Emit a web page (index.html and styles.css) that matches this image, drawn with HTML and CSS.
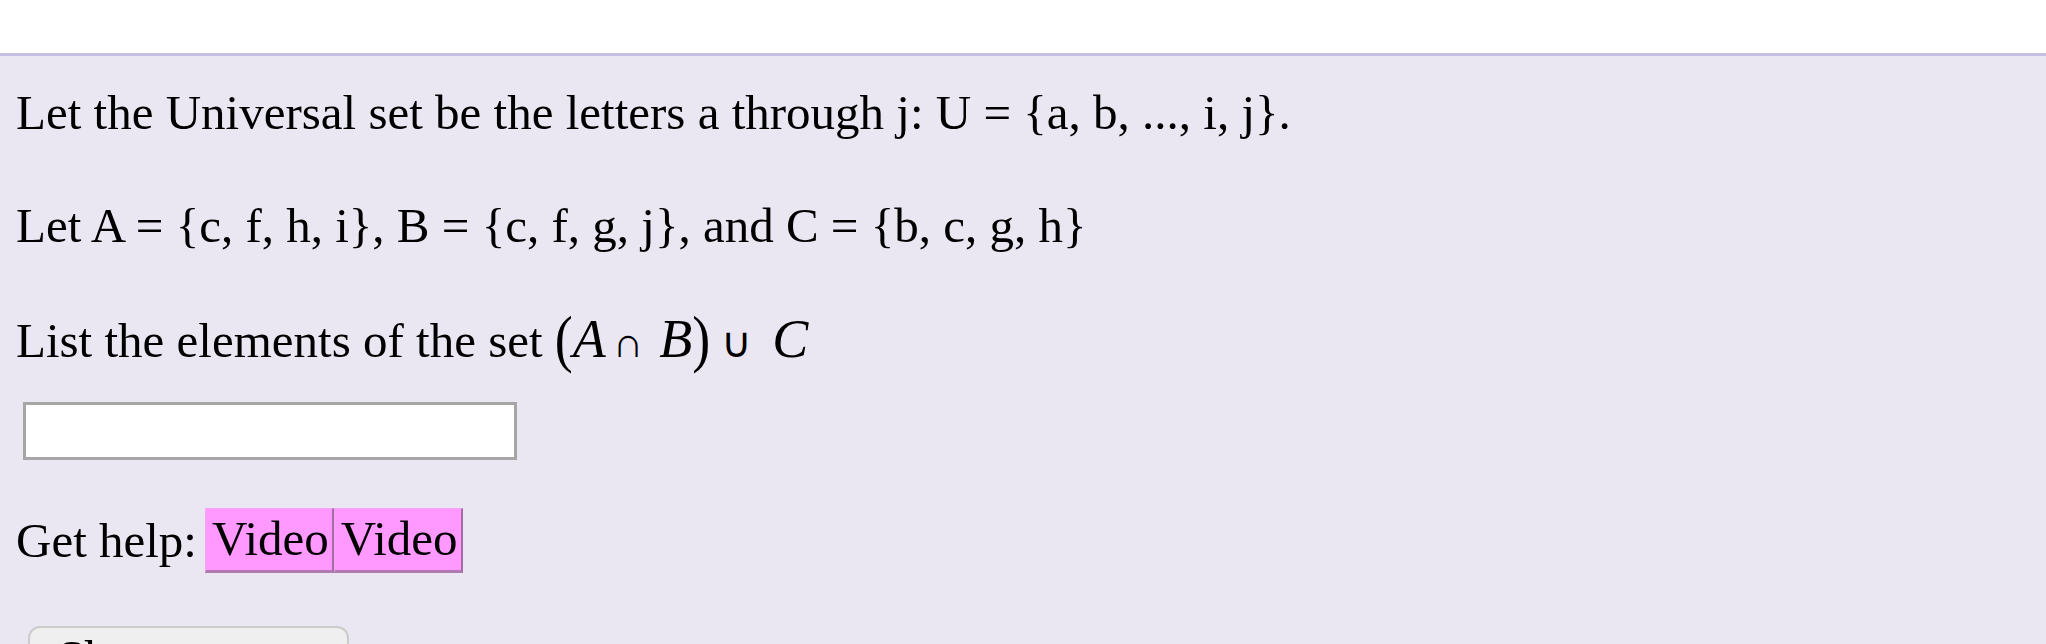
FILE: index.html
```html
<!DOCTYPE html>
<html>
<head lang="en">
    <meta charset="UTF-8">
    <title>Question</title>
    <link rel="stylesheet" href="styles.css">
</head>
<body>
    <div id="top-bar"></div>
    <div id="question">
        <p>Let the Universal set be the letters a through j: U = {a, b, ..., i, j}.</p>
        <p>Let A = {c, f, h, i}, B = {c, f, g, j}, and C = {b, c, g, h}</p>
        <p>List the elements of the set <span class="math"><span class="paren">(</span><i>A</i><span class="op cap">∩</span><i>B</i><span class="paren">)</span><span class="op cup">∪</span><i>C</i></span></p>
        <div class="answer">
            <input type="text" class="answer-box">
        </div>
        <div class="help">
            <span>Get help:</span>
            <div class="help-btns">
                <a class="help-btn">Video</a><a class="help-btn">Video</a>
            </div>
        </div>
        <div class="show">
            <button class="show-btn">Show answer</button>
        </div>
    </div>
</body>
</html>
```

FILE: styles.css
```css
*{
    margin: 0;
    padding: 0;
}
html,body{
    background: #eae7f2;
}
body{
    font-family: "Liberation Serif", "Times New Roman", serif;
    font-size: 49px;
    color: #000;
    overflow: hidden;
}
#top-bar{
    height: 53px;
    background: #fff;
    border-bottom: 3px solid #c3c1df;
}
#question{
    padding: 29px 16px 0;
}
#question p{
    line-height: 56px;
    margin-bottom: 57px;
    white-space: nowrap;
}
#question p:nth-of-type(3){
    margin-bottom: 0;
}
/* (A ∩ B) ∪ C */
.math{
    font-size: 54px;
}
.math .paren{
    display: inline-block;
    transform: scaleY(1.16);
}
.math i{
    font-weight: 500;
}
.math .op{
    font-size: 42px;
}
.math .cap{
    padding: 0 16px 0 7px;
}
.math .cup{
    padding: 0 20px 0 11px;
}
.answer{
    padding: 31px 0 0 7px;
}
.answer-box{
    display: block;
    width: 494px;
    height: 58px;
    box-sizing: border-box;
    border: 3px solid #a6a6a6;
    background: #fff;
    outline: none;
}
.help{
    display: flex;
    align-items: center;
    margin-top: 48px;
    line-height: 56px;
}
.help-btns{
    display: flex;
    margin-left: 8px;
}
.help-btn{
    display: block;
    height: 65px;
    box-sizing: border-box;
    padding: 0 3px 0 6px;
    line-height: 60px;
    background: #ff99ff;
    border-top: 1px solid #f3a6f3;
    border-left: 1px solid #f3a6f3;
    border-right: 2px solid #a46ca4;
    border-bottom: 3px solid #b07ab0;
    color: #000;
}
.show{
    margin-top: 53px;
    padding-left: 12px;
}
.show-btn{
    font-family: "Liberation Serif", "Times New Roman", serif;
    font-size: 49px;
    padding: 1px 27px 8px;
    background: #efefef;
    border: 2px solid #cccccc;
    border-radius: 12px;
    color: #000;
}
```
